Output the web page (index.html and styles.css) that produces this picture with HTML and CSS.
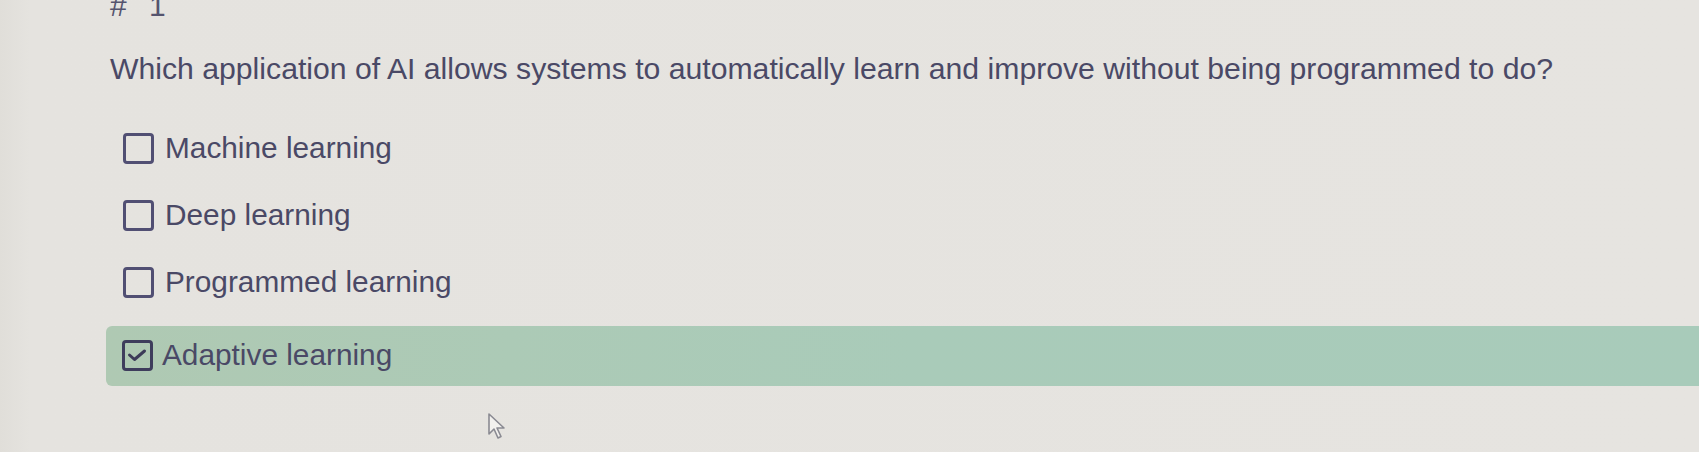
FILE: index.html
```html
<!DOCTYPE html>
<html>
<head>
<meta charset="utf-8">
<link rel="stylesheet" href="styles.css">
</head>
<body>
<div class="page">
  <div class="qnum"># 1</div>
  <div class="question">Which application of AI allows systems to automatically learn and improve without being programmed to do?</div>
  <div class="options">
    <div class="option"><span class="box"></span><span class="label">Machine learning</span></div>
    <div class="option"><span class="box"></span><span class="label">Deep learning</span></div>
    <div class="option"><span class="box"></span><span class="label">Programmed learning</span></div>
    <div class="option selected"><span class="box checked"><svg viewBox="0 0 25 25" width="25" height="25"><path d="M4.5 12 L9.5 16.5 L19.5 8" fill="none" stroke="#3c3b58" stroke-width="3" stroke-linecap="round" stroke-linejoin="round"/></svg></span><span class="label">Adaptive learning</span></div>
  </div>
  <svg class="cursor" viewBox="0 0 20 30" width="20" height="30"><path d="M2 2 L2 22 L7 17 L11 26 L14 24.5 L10 16 L17 16 Z" fill="#f2f1ee" stroke="#8a8a92" stroke-width="1.6" stroke-linejoin="round"/></svg>
</div>
</body>
</html>
```
FILE: styles.css
```css
html, body {
  margin: 0;
  padding: 0;
  background: #e5e3df;
  overflow: hidden;
}
.page {
  position: relative;
  display: flow-root;
  width: 1699px;
  height: 452px;
  padding-left: 110px;
  box-sizing: border-box;
  font-family: "Liberation Sans", Arial, sans-serif;
  color: #4a4966;
  background: linear-gradient(90deg, #e0ded9 0px, #e5e3df 30px, #e6e4e0 100%);
}
.qnum {
  font-size: 30px;
  line-height: 30px;
  margin-top: -9px;
  color: #55546e;
  word-spacing: 14px;
}
.question {
  font-size: 30.2px;
  line-height: 30px;
  margin-top: 33px;
}
.options {
  display: flex;
  flex-direction: column;
  gap: 7px;
  margin-top: 34px;
  margin-left: -4px;
}
.option {
  display: flex;
  align-items: center;
  height: 60px;
  padding-left: 17px;
  gap: 11px;
  font-size: 29.8px;
}
.option.selected {
  background: linear-gradient(90deg, #afc9b3 0%, #a9cbb9 50%, #a8cbba 100%);
  border-radius: 6px 0 0 6px;
  margin-right: -20px;
  margin-top: 7px;
  padding-left: 16px;
  padding-bottom: 2px;
  box-sizing: border-box;
  gap: 9px;
}
.box {
  width: 31px;
  height: 31px;
  box-sizing: border-box;
  border: 3px solid #514f73;
  border-radius: 4px;
  flex: none;
  display: flex;
  align-items: center;
  justify-content: center;
}
.box.checked {
  border-color: #3e3d5c;
}
.cursor {
  position: absolute;
  left: 487px;
  top: 412px;
}
```
